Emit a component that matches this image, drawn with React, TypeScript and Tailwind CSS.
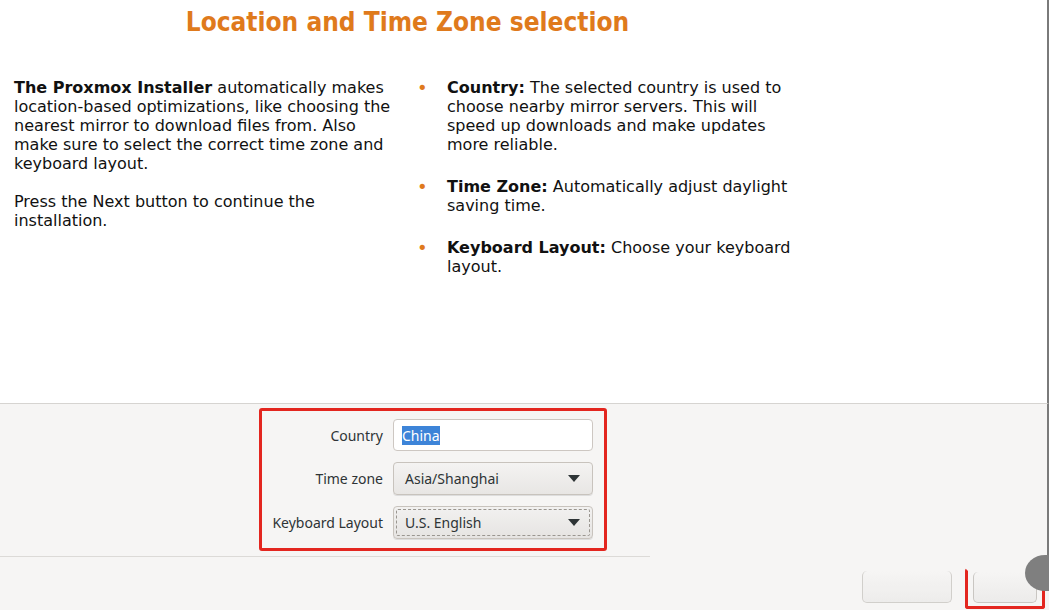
import React from "react";

const bullets = [
  {
    label: "Country:",
    text: "The selected country is used to choose nearby mirror servers. This will speed up downloads and make updates more reliable.",
  },
  {
    label: "Time Zone:",
    text: "Automatically adjust daylight saving time.",
  },
  {
    label: "Keyboard Layout:",
    text: "Choose your keyboard layout.",
  },
];

const Caret = () => (
  <svg width="12" height="7" viewBox="0 0 12 7" className="shrink-0">
    <path d="M0 0 L12 0 L6 7 Z" fill="#2e3436" />
  </svg>
);

export default function App() {
  return (
    <div className="relative w-[1049px] h-[610px] overflow-hidden bg-[#f6f5f4] flex flex-col [font-family:'DejaVu_Sans',sans-serif]">
      {/* top content */}
      <div className="h-[403px] shrink-0 bg-white border-r-2 border-[#7a7a7a]">
        <div className="w-[815px]">
          <h1 className="pt-[6px] text-center text-[26px] leading-[32px] font-bold text-[#df7a1c] [font-family:'DejaVu_Sans_Condensed','DejaVu_Sans',sans-serif] [font-stretch:condensed]">
            Location and Time Zone selection
          </h1>
          <div className="mt-[40px] flex text-[16px] leading-[19px] text-[#111]">
            <div className="w-[404px] shrink-0 pl-[14px] pr-[2px]">
              <p>
                <b>The Proxmox Installer</b> automatically makes location-based optimizations, like choosing the
                nearest mirror to download files from. Also make sure to select the correct time zone and keyboard
                layout.
              </p>
              <p className="mt-[19px]">Press the Next button to continue the installation.</p>
            </div>
            <ul className="w-[410px] shrink-0 pl-[10px] flex flex-col gap-[23px]">
              {bullets.map((b, i) => (
                <li key={i} className="flex">
                  <span className="w-[33px] shrink-0 pl-[3px] text-[#df7a1c] text-[18px] leading-[19px]">•</span>
                  <span className="w-[352px] shrink-0">
                    <b>{b.label}</b> {b.text}
                  </span>
                </li>
              ))}
            </ul>
          </div>
        </div>
      </div>

      {/* options panel */}
      <div className="h-[153px] shrink-0 border-t border-[#d6d4d1] border-r-2 border-r-[#7a7a7a] pt-[4px] [font-family:'Noto_Sans',sans-serif] text-[14px] text-[#2e3436]">
        <div className="ml-[259px] w-[348px] border-[3px] border-[#e3261f] rounded-[3px] pt-[8px] pb-[9px] pl-[10px] pr-[11px] flex flex-col gap-[11px]">
          <div className="flex items-center">
            <span className="w-[111px] text-right">Country</span>
            <div className="ml-[10px] w-[200px] h-[32px] bg-white border border-[#cdc7c2] rounded-[4px] flex items-center px-[8px]">
              <span className="bg-[#3d84d8] text-white leading-[19px]">China</span>
            </div>
          </div>
          <div className="flex items-center">
            <span className="w-[111px] text-right">Time zone</span>
            <div className="ml-[10px] w-[200px] h-[33px] bg-gradient-to-b from-[#f4f3f2] to-[#e8e6e4] border border-[#c8c3bd] rounded-[4px] flex items-center justify-between pl-[11px] pr-[12px] shadow-[0_1px_0_#ddd]">
              <span>Asia/Shanghai</span>
              <Caret />
            </div>
          </div>
          <div className="flex items-center">
            <span className="w-[111px] text-right">Keyboard Layout</span>
            <div className="ml-[10px] w-[200px] h-[33px] bg-gradient-to-b from-[#f2f1f0] to-[#e6e4e2] border border-[#c8c3bd] rounded-[4px] p-[2px] shadow-[0_1px_0_#ddd]">
              <div className="h-full border border-dashed border-[#9a9690] rounded-[2px] flex items-center justify-between pl-[8px] pr-[9px]">
                <span>U.S. English</span>
                <Caret />
              </div>
            </div>
          </div>
        </div>
      </div>

      {/* footer */}
      <div className="relative flex-1 border-t border-[#dcdad7] flex justify-end items-start pt-[11px] pr-[4px]">
        <div className="absolute top-[-1px] left-[650px] right-0 h-[2px] bg-[#f6f5f4]" />
        <div className="w-[90px] h-[32px] mt-[3px] rounded-[5px] bg-gradient-to-b from-[#f6f5f4] to-[#ecebea] border-b border-x border-[#c9c6c2] opacity-80" />
        <div className="ml-[13px] w-[80px] h-[41px] border-[3px] border-[#e3261f] border-t-transparent rounded-[3px] pt-[1px] px-[5px]">
          <div className="w-full h-[31px] rounded-[5px] bg-gradient-to-b from-[#f6f5f4] to-[#ecebea] border-b border-x border-[#c9c6c2]" />
        </div>
        <div className="absolute left-[1025px] top-[-2px] w-[40px] h-[36px] rounded-[50%_20%_20%_50%] bg-[#7f7f7f]" />
      </div>
    </div>
  );
}
